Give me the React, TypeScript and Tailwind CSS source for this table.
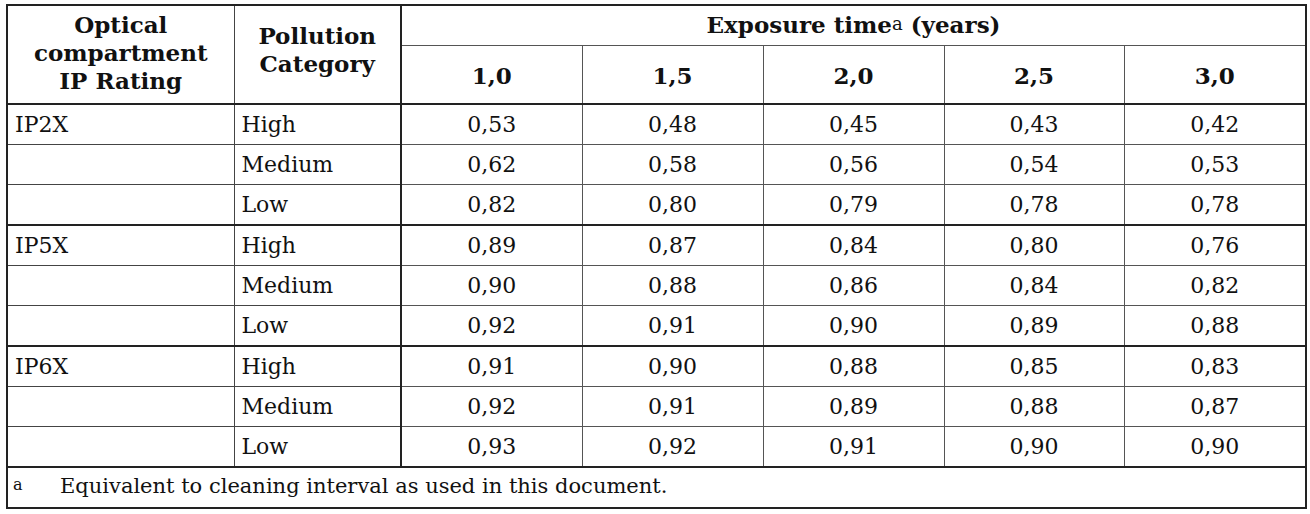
import React from "react";

type Row = { ip: string; cat: string; vals: string[]; groupEnd: boolean };

const data: Row[] = [
  { ip: "IP2X", cat: "High", vals: ["0,53", "0,48", "0,45", "0,43", "0,42"], groupEnd: false },
  { ip: "", cat: "Medium", vals: ["0,62", "0,58", "0,56", "0,54", "0,53"], groupEnd: false },
  { ip: "", cat: "Low", vals: ["0,82", "0,80", "0,79", "0,78", "0,78"], groupEnd: true },
  { ip: "IP5X", cat: "High", vals: ["0,89", "0,87", "0,84", "0,80", "0,76"], groupEnd: false },
  { ip: "", cat: "Medium", vals: ["0,90", "0,88", "0,86", "0,84", "0,82"], groupEnd: false },
  { ip: "", cat: "Low", vals: ["0,92", "0,91", "0,90", "0,89", "0,88"], groupEnd: true },
  { ip: "IP6X", cat: "High", vals: ["0,91", "0,90", "0,88", "0,85", "0,83"], groupEnd: false },
  { ip: "", cat: "Medium", vals: ["0,92", "0,91", "0,89", "0,88", "0,87"], groupEnd: false },
  { ip: "", cat: "Low", vals: ["0,93", "0,92", "0,91", "0,90", "0,90"], groupEnd: true },
];

const years = ["1,0", "1,5", "2,0", "2,5", "3,0"];

export default function App() {
  return (
    <div
      className="w-[1310px] h-[514px] bg-white pt-[4px] pl-[6px] text-[#111]"
      style={{ fontFamily: '"DejaVu Serif", "Liberation Serif", serif' }}
    >
      <table className="table-fixed border-collapse w-[1300px] border-2 border-[#222]">
        <colgroup>
          <col className="w-[227px]" />
          <col className="w-[167px]" />
          <col className="w-[181px]" />
          <col className="w-[181px]" />
          <col className="w-[181px]" />
          <col className="w-[180px]" />
          <col className="w-[182px]" />
        </colgroup>
        <thead>
          <tr className="h-[40px]">
            <th
              rowSpan={2}
              className="border border-[#444] border-b-2 border-b-[#222] text-[23px] leading-[28px] font-bold text-center align-middle pb-[3px]"
            >
              Optical
              <br />
              compartment
              <br />
              IP Rating
            </th>
            <th
              rowSpan={2}
              className="border border-[#444] border-r-2 border-r-[#222] border-b-2 border-b-[#222] text-[23px] leading-[28px] font-bold text-center align-middle pb-[10px]"
            >
              Pollution
              <br />
              Category
            </th>
            <th colSpan={5} className="border border-[#555] text-[23px] font-bold text-center align-middle">
              Exposure time
              <span className="text-[18px] font-normal relative top-[-3px]">a</span> (years)
            </th>
          </tr>
          <tr className="h-[59px]">
            {years.map((y) => (
              <th
                key={y}
                className="border border-[#555] border-b-2 border-b-[#222] text-[23px] font-bold text-center align-middle pt-[4px]"
              >
                {y}
              </th>
            ))}
          </tr>
        </thead>
        <tbody>
          {data.map((r, i) => (
            <tr key={i} className="h-[40.3px]">
              <td
                className={`border border-[#444] px-[7px] text-[22px] align-middle ${
                  r.groupEnd ? "border-b-2 border-b-[#222]" : ""
                }`}
              >
                {r.ip}
              </td>
              <td
                className={`border border-[#444] border-r-2 border-r-[#222] px-[7px] text-[22px] align-middle ${
                  r.groupEnd ? "border-b-2 border-b-[#222]" : ""
                }`}
              >
                {r.cat}
              </td>
              {r.vals.map((v, j) => (
                <td
                  key={j}
                  className={`border border-[#555] text-center text-[22px] align-middle ${
                    r.groupEnd ? "border-b-2 border-b-[#222]" : ""
                  }`}
                >
                  {v}
                </td>
              ))}
            </tr>
          ))}
          <tr className="h-[41px]">
            <td colSpan={7} className="border-2 border-[#222] px-[5px] text-[21px] align-middle">
              <span className="inline-block w-[47px] text-[16px] relative top-[-3px]">a</span>
              Equivalent to cleaning interval as used in this document.
            </td>
          </tr>
        </tbody>
      </table>
    </div>
  );
}
